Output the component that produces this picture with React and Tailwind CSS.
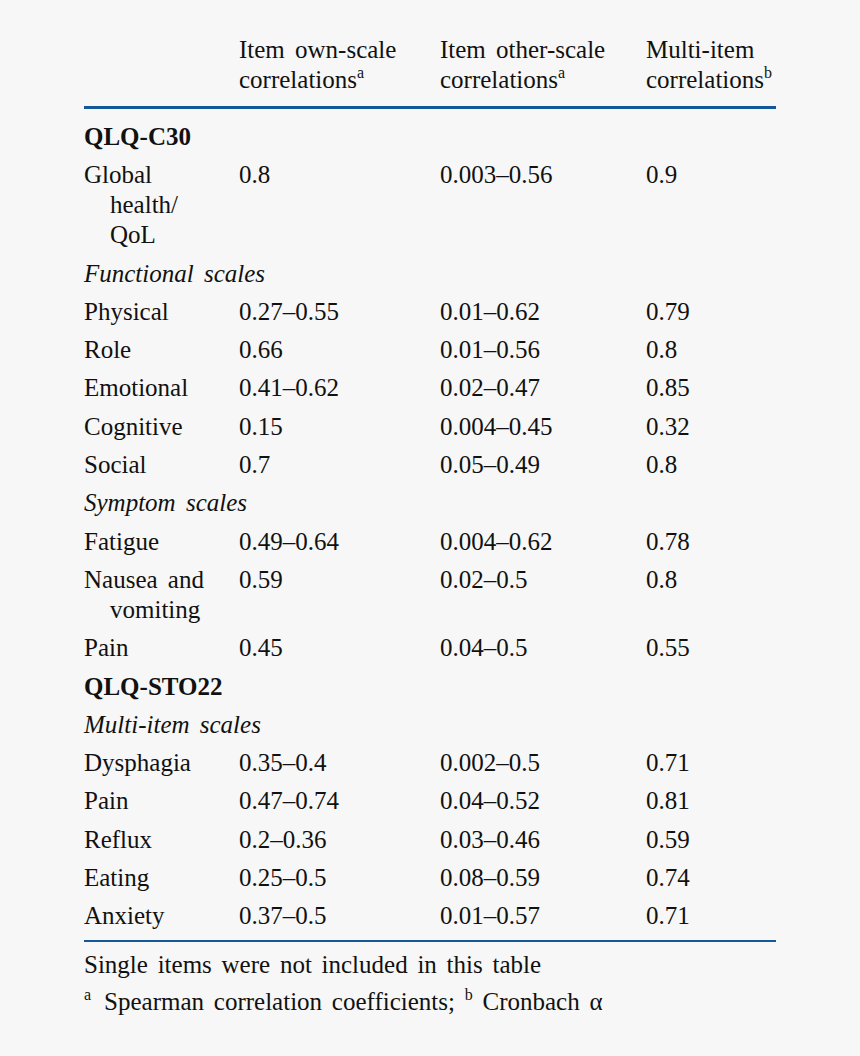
const rows = [
  { type: 'head', label: 'QLQ-C30' },
  { label: 'Global health/ QoL', lines: ['Global', 'health/', 'QoL'], v: ['0.8', '0.003–0.56', '0.9'] },
  { type: 'sub', label: 'Functional scales' },
  { label: 'Physical', v: ['0.27–0.55', '0.01–0.62', '0.79'] },
  { label: 'Role', v: ['0.66', '0.01–0.56', '0.8'] },
  { label: 'Emotional', v: ['0.41–0.62', '0.02–0.47', '0.85'] },
  { label: 'Cognitive', v: ['0.15', '0.004–0.45', '0.32'] },
  { label: 'Social', v: ['0.7', '0.05–0.49', '0.8'] },
  { type: 'sub', label: 'Symptom scales' },
  { label: 'Fatigue', v: ['0.49–0.64', '0.004–0.62', '0.78'] },
  { label: 'Nausea and vomiting', lines: ['Nausea and', 'vomiting'], v: ['0.59', '0.02–0.5', '0.8'] },
  { label: 'Pain', v: ['0.45', '0.04–0.5', '0.55'] },
  { type: 'head', label: 'QLQ-STO22' },
  { type: 'sub', label: 'Multi-item scales' },
  { label: 'Dysphagia', v: ['0.35–0.4', '0.002–0.5', '0.71'] },
  { label: 'Pain', v: ['0.47–0.74', '0.04–0.52', '0.81'] },
  { label: 'Reflux', v: ['0.2–0.36', '0.03–0.46', '0.59'] },
  { label: 'Eating', v: ['0.25–0.5', '0.08–0.59', '0.74'] },
  { label: 'Anxiety', v: ['0.37–0.5', '0.01–0.57', '0.71'] },
];

const grid = 'grid grid-cols-[155px_201px_206px_1fr]';

function Sup({ children }) {
  return <sup className="text-[16px] -top-[10px]">{children}</sup>;
}

export default function App() {
  return (
    <div className="min-h-[1056px] w-[860px] bg-[#f7f7f7] text-[#111] [font-family:Liberation_Serif,Times_New_Roman,serif] text-[25px] leading-[30px] [word-spacing:4px]">
      <div className="ml-[84px] w-[692px] pt-[35px]">
        {/* Header */}
        <div className={`${grid} pb-[11px]`}>
          <div />
          <div>Item own-scale<br />correlations<Sup>a</Sup></div>
          <div>Item other-scale<br />correlations<Sup>a</Sup></div>
          <div>Multi-item<br />correlations<Sup>b</Sup></div>
        </div>
        <div className="h-[3px] bg-[#15589a]" />

        <div className="pt-[13px]">
          {rows.map((r, i) => {
            if (r.type === 'head') {
              return <div key={i} className="font-bold h-[38.3px]">{r.label}</div>;
            }
            if (r.type === 'sub') {
              return <div key={i} className="italic h-[38.3px]">{r.label}</div>;
            }
            const lines = r.lines || [r.label];
            return (
              <div key={i} className={`${grid} pb-[8.3px]`}>
                <div>
                  {lines.map((l, j) => (
                    <div key={j} className={j > 0 ? 'pl-[26px]' : ''}>{l}</div>
                  ))}
                </div>
                {r.v.map((x, j) => <div key={j}>{x}</div>)}
              </div>
            );
          })}
        </div>
        <div className="h-[2px] bg-[#15589a]" />

        {/* Footnotes */}
        <div className="pt-[4px] leading-[37px] [word-spacing:3.5px]">
          <div>Single items were not included in this table</div>
          <div>
            <Sup>a</Sup>
            <span className="pl-[13px]">Spearman correlation coefficients; <Sup>b</Sup> Cronbach α</span>
          </div>
        </div>
      </div>
    </div>
  );
}
